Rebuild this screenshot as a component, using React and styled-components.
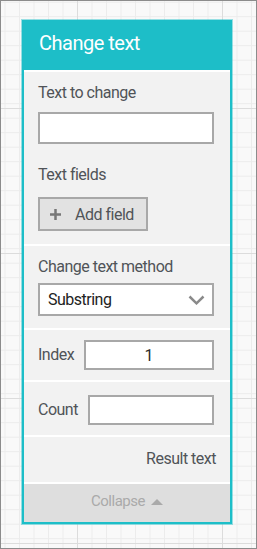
import React from "react";
import styled, { createGlobalStyle } from "styled-components";

const Global = createGlobalStyle`
  html, body {
    margin: 0;
    padding: 0;
    background: #f9f9f9;
  }
  body {
    font-family: Roboto, "Liberation Sans", sans-serif;
  }
`;

const teal = "#1dbec8";

// grid paper behind the card
const Page = styled.div`
  width: 257px;
  height: 549px;
  box-sizing: border-box;
  border: 1px solid #8c8c8c;
  padding: 19px 0 0 21px;
  background-color: #f9f9f9;
  background-image:
    linear-gradient(to right, #dcdcdc 1px, transparent 1px),
    linear-gradient(to bottom, #dcdcdc 1px, transparent 1px),
    linear-gradient(to right, #ececec 1px, transparent 1px),
    linear-gradient(to bottom, #ececec 1px, transparent 1px);
  background-size: 145px 145px, 145px 145px, 14.5px 14.5px, 14.5px 14.5px;
  background-position: 76px 0, 0 107px, 3.5px 0, 0 0.7px;
`;

const Card = styled.div`
  width: 210px;
  box-sizing: border-box;
  border: 2px solid ${teal};
  box-shadow: 0 0 0 1px rgba(29, 190, 200, 0.45);
  background: #fff;
  display: flex;
  flex-direction: column;
  gap: 2px;
`;

const Header = styled.div`
  background: ${teal};
  color: #fff;
  font-size: 20px;
  line-height: 24px;
  letter-spacing: -0.5px;
  padding: 9px 15px 15px;
`;

const Section = styled.div`
  background: #f2f2f2;
  padding: ${(p) => p.$pad || "11px 16px 12px 14px"};
  display: flex;
  flex-direction: ${(p) => (p.$row ? "row" : "column")};
  align-items: ${(p) => (p.$row ? "center" : p.$end ? "flex-end" : "stretch")};
  gap: ${(p) => (p.$row ? "10px" : "0")};
`;

const Label = styled.div`
  color: #505458;
  font-size: 16px;
  line-height: 20px;
  letter-spacing: -0.5px;
  white-space: nowrap;
  margin-top: ${(p) => p.$mt || 0}px;
`;

const TextInput = styled.input`
  box-sizing: border-box;
  width: 100%;
  min-width: 0;
  flex: ${(p) => (p.$grow ? "1 1 0" : "none")};
  height: ${(p) => p.$h || 30}px;
  margin: ${(p) => p.$mt || 0}px 0 0;
  border: 2px solid #a8a8a8;
  border-radius: 0;
  background: #fff;
  outline: none;
  font-family: Roboto, "Liberation Sans", sans-serif;
  font-size: 16px;
  color: #2b2b2b;
  text-align: ${(p) => (p.$center ? "center" : "left")};
  padding: 0 8px;
`;

const AddButton = styled.button`
  align-self: flex-start;
  box-sizing: border-box;
  width: 110px;
  height: 34px;
  margin-top: 12px;
  border: 2px solid #a8a8a8;
  border-radius: 0;
  background: #e2e2e2;
  display: flex;
  align-items: center;
  gap: 14px;
  padding: 0 0 0 10px;
  font-family: Roboto, "Liberation Sans", sans-serif;
  font-size: 16px;
  letter-spacing: -0.5px;
  color: #505458;
  cursor: pointer;
`;

const SelectBox = styled.div`
  box-sizing: border-box;
  height: 33px;
  margin-top: 6px;
  border: 2px solid #a8a8a8;
  background: #fff;
  display: flex;
  align-items: center;
  justify-content: space-between;
  padding: 0 7px 0 8px;
  font-size: 16px;
  letter-spacing: -0.5px;
  color: #222;
`;

const Footer = styled.div`
  background: #dedede;
  color: #aaaaaa;
  font-size: 15px;
  line-height: 18px;
  letter-spacing: -0.5px;
  padding: 8px 0 12px;
  display: flex;
  justify-content: center;
  align-items: center;
  gap: 6px;
  cursor: pointer;
`;

const Plus = () => (
  <svg width="11" height="11" viewBox="0 0 11 11">
    <path d="M5.5 0v11M0 5.5h11" stroke="#777" strokeWidth="2.5" />
  </svg>
);

const Chevron = () => (
  <svg width="17" height="10" viewBox="0 0 17 10">
    <polyline points="1.5,1.5 8.5,8.3 15.5,1.5" fill="none" stroke="#8a8a8a" strokeWidth="2.5" />
  </svg>
);

const Triangle = () => (
  <svg width="12" height="6" viewBox="0 0 12 6" style={{ marginTop: 2 }}>
    <polygon points="0,6 6,0 12,6" fill="#aaaaaa" />
  </svg>
);

export default function App() {
  return (
    <>
      <Global />
      <Page>
        <Card>
          <Header>Change text</Header>

          <Section $pad="11px 16px 13px 14px">
            <Label>Text to change</Label>
            <TextInput $h={32} $mt={9} defaultValue="" />
            <Label $mt={21}>Text fields</Label>
            <AddButton type="button">
              <Plus />
              <span>Add field</span>
            </AddButton>
          </Section>

          <Section>
            <Label>Change text method</Label>
            <SelectBox>
              <span>Substring</span>
              <Chevron />
            </SelectBox>
          </Section>

          <Section $row $pad="10px 16px 10px 14px">
            <Label>Index</Label>
            <TextInput $grow $center defaultValue="1" />
          </Section>

          <Section $row $pad="13px 16px 10px 14px">
            <Label>Count</Label>
            <TextInput $grow defaultValue="" />
          </Section>

          <Section $end $pad="12px 14px 13px 14px">
            <Label>Result text</Label>
          </Section>

          <Footer>
            <span>Collapse</span>
            <Triangle />
          </Footer>
        </Card>
      </Page>
    </>
  );
}
